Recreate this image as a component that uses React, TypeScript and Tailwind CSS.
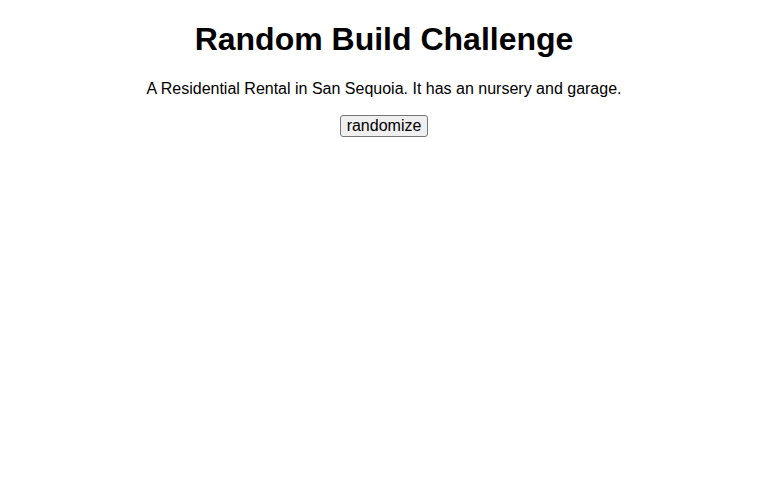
import React from 'react';

const types = ['Residential Rental', 'Starter Home', 'Family Home', 'Vacation Home'];
const worlds = ['San Sequoia', 'Willow Creek', 'Oasis Springs', 'Newcrest'];
const rooms = ['nursery', 'garage', 'library', 'pool', 'art studio'];

export default function App() {
  const [challenge, setChallenge] = React.useState({
    type: 'Residential Rental',
    world: 'San Sequoia',
    extras: ['nursery', 'garage'],
  });

  const randomize = () => {
    const pick = <T,>(list: T[]) => list[Math.floor(Math.random() * list.length)];
    const first = pick(rooms);
    const second = pick(rooms.filter((r) => r !== first));
    setChallenge({ type: pick(types), world: pick(worlds), extras: [first, second] });
  };

  return (
    <div className="text-center text-black bg-white font-['Liberation_Sans',Arial,sans-serif]">
      <h1 className="text-[32px] leading-[36.8px] font-bold pt-[21.44px] mb-[21.44px]">
        Random Build Challenge
      </h1>
      <p className="text-base leading-[18.4px] mb-4">
        A {challenge.type} in {challenge.world}. It has an {challenge.extras[0]} and{' '}
        {challenge.extras[1]}.
      </p>
      <button
        onClick={randomize}
        className="text-base leading-[18.4px] px-[6px] py-[1px] bg-[#efefef] border border-[#767676] rounded-[3px] hover:bg-[#e5e5e5]"
      >
        randomize
      </button>
    </div>
  );
}
